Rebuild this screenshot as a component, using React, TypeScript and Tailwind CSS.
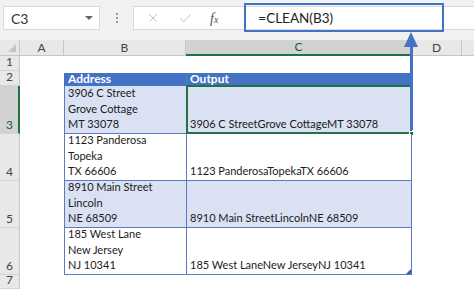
import { X, Check } from "lucide-react";

const rows = [
  { n: 3, lines: ["3906 C Street", "Grove Cottage", "MT 33078"], banded: true },
  { n: 4, lines: ["1123 Panderosa", "Topeka", "TX 66606"], banded: false },
  { n: 5, lines: ["8910 Main Street", "Lincoln", "NE 68509"], banded: true },
  { n: 6, lines: ["185 West Lane", "New Jersey", "NJ 10341"], banded: false },
];

function RowHead({ n, active }: { n: number; active?: boolean }) {
  return (
    <div
      className={`flex items-end pl-[6px] pb-[1px] text-[12px] leading-[14px] border-b border-[#d4d4d4] ${
        active
          ? "bg-[#d2d2d2] text-[#1e5c3a] border-r-2 border-r-[#217346]"
          : "bg-[#e8e8e8] text-[#444] border-r border-r-[#c6c6c6]"
      }`}
    >
      {n}
    </div>
  );
}

export default function App() {
  return (
    <div className="relative w-[474px] h-[289px] overflow-hidden bg-white font-['Lato',sans-serif] text-[#1b1b1b]">
      {/* formula bar */}
      <div className="h-[40px] bg-[#f1f1f1] flex items-start pt-[6px]">
        <div className="ml-[3px] w-[97px] h-[24px] bg-white border border-[#dadada] flex items-center justify-between pl-[7px] pr-[6px]">
          <span className="text-[14px] text-[#333]">C3</span>
          <span className="w-0 h-0 border-l-[4px] border-r-[4px] border-t-[4px] border-l-transparent border-r-transparent border-t-[#666]" />
        </div>
        <div className="w-[33px] h-[24px] flex flex-col items-center justify-center gap-[2px]">
          <span className="w-[2px] h-[2px] bg-[#9a9a9a]" />
          <span className="w-[2px] h-[2px] bg-[#9a9a9a]" />
          <span className="w-[2px] h-[2px] bg-[#9a9a9a]" />
        </div>
        <div className="flex-1 h-[24px] bg-white border-y border-l border-[#dadada] flex items-center">
          <X className="ml-[12px] w-[14px] h-[14px] text-[#b5b5b5]" strokeWidth={1.5} />
          <Check className="ml-[18px] w-[15px] h-[15px] text-[#b5b5b5]" strokeWidth={1.5} />
          <span className="ml-[17px] font-['Liberation_Serif',serif] italic text-[14px] text-[#555]">
            f<span className="text-[10px]">x</span>
          </span>
          <span className="ml-[40px] text-[13.5px] text-[#222]">=CLEAN(B3)</span>
        </div>
      </div>

      {/* sheet */}
      <div className="grid grid-cols-[20px_44px_122px_226px_50px_1fr] grid-rows-[16px_15px_15px_48px_47px_47px_47px_14px] text-[11px]">
        {/* column headers */}
        <div className="relative bg-[#e8e8e8] border-r border-b border-[#c6c6c6]">
          <span className="absolute right-[3px] bottom-[3px] w-0 h-0 border-l-[8px] border-b-[8px] border-l-transparent border-b-[#c4c4c4]" />
        </div>
        <div className="bg-[#e8e8e8] border-r border-b border-[#c6c6c6] flex items-center justify-center text-[12px] text-[#444]">A</div>
        <div className="bg-[#e8e8e8] border-r border-b border-[#c6c6c6] flex items-center justify-center text-[12px] text-[#444]">B</div>
        <div className="bg-[#d2d2d2] border-r border-[#c6c6c6] border-b-2 border-b-[#217346] flex items-center justify-center text-[12px] text-[#1e5c3a]">C</div>
        <div className="bg-[#e8e8e8] border-r border-b border-[#c6c6c6] flex items-center justify-center text-[12px] text-[#444]">D</div>
        <div className="bg-[#e8e8e8] border-b border-[#c6c6c6]" />

        {/* row 1 */}
        <RowHead n={1} />
        <div className="col-span-5" />

        {/* row 2 */}
        <RowHead n={2} />
        <div />
        <div className="mt-[2px] bg-[#4472c4] border-l border-[#4a6fb8] text-white text-[12px] font-bold flex items-end pl-[3px] leading-[14px]">Address</div>
        <div className="mt-[2px] bg-[#4472c4] border-l border-r border-[#5b7fc5] text-white text-[12px] font-bold flex items-end pl-[3px] leading-[14px]">Output</div>
        <div className="col-span-2" />

        {rows.map((r) => {
          const bg = r.banded ? "bg-[#d9e1f2]" : "bg-white";
          return (
            <div key={r.n} className="contents">
              <RowHead n={r.n} active={r.n === 3} />
              <div />
              <div className={`${bg} border-l border-b border-[#5b7bc0] flex flex-col justify-end pl-[3px] pb-[1px] leading-[15.7px]`}>
                {r.lines.map((l) => (
                  <span key={l}>{l}</span>
                ))}
              </div>
              <div className={`relative ${bg} border-l border-r border-b border-[#5b7bc0] flex flex-col justify-end pl-[3px] pb-[1px] leading-[15.7px]`}>
                <span>{r.lines.join("")}</span>
                {r.n === 3 && (
                  <>
                    <span className="absolute -left-[1px] -top-[1px] -right-[1px] -bottom-[1px] border-2 border-[#217346]" />
                    <span className="absolute -right-[3px] -bottom-[3px] w-[5px] h-[5px] bg-[#217346] border border-white" />
                  </>
                )}
                {r.n === 6 && (
                  <span className="absolute right-0 bottom-0 w-0 h-0 border-l-[5px] border-b-[5px] border-l-transparent border-b-[#3b5fb0]" />
                )}
              </div>
              <div className="col-span-2" />
            </div>
          );
        })}

        {/* row 7 */}
        <RowHead n={7} />
        <div className="col-span-5" />
      </div>

      {/* annotation: box around formula and arrow */}
      <div className="absolute left-[244px] top-[3px] w-[200px] h-[29px] border-2 border-[#4472c4]" />
      <div className="absolute left-[410px] top-[46px] w-[3px] h-[84px] bg-[#4472c4]" />
      <div className="absolute left-[404px] top-[32px] w-0 h-0 border-l-[7.5px] border-r-[7.5px] border-b-[15px] border-l-transparent border-r-transparent border-b-[#4472c4]" />
    </div>
  );
}
